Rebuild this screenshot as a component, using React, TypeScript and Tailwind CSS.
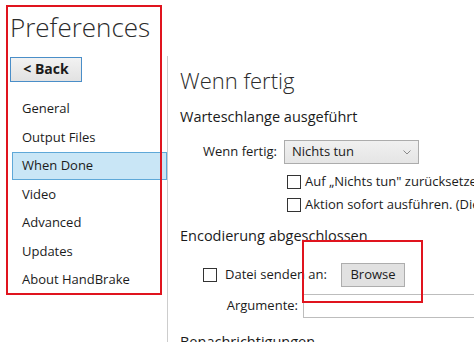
import React from "react";

function Checkbox() {
  return <span className="inline-block w-[14px] h-[14px] border border-[#333333] bg-white shrink-0" />;
}

export default function App() {
  const nav = ["General", "Output Files", "When Done", "Video", "Advanced", "Updates", "About HandBrake"];
  return (
    <div className="relative w-[474px] h-[342px] overflow-hidden bg-white text-[#1b1b1b] font-['Open_Sans',sans-serif]">
      <div className="flex h-full">
        {/* Left column */}
        <div className="w-[168px] shrink-0 flex flex-col">
          <div className="h-[56px] pl-[10px] pt-[10px] text-[26px] leading-[34px] font-light text-[#2b2b2b]">Preferences</div>
          <div className="flex-1 border-r border-[#cdcdcd] flex flex-col">
            <div className="pl-[10px]">
              <button className="w-[72px] h-[25px] border border-[#4a8ec8] bg-gradient-to-b from-[#f2f2f2] to-[#e2e2e2] text-[14px] font-bold leading-none text-[#1b1b1b]">
                &lt; Back
              </button>
            </div>
            <div className="mt-[13px] flex flex-col">
              {nav.map((n) => (
                <div
                  key={n}
                  className={
                    n === "When Done"
                      ? "ml-[12px] h-[28.5px] flex items-center pl-[9px] text-[13px] bg-[#c9e6f6] border border-[#5ea8d8]"
                      : "ml-[12px] h-[28.5px] flex items-center pl-[10px] text-[13px]"
                  }
                >
                  {n}
                </div>
              ))}
            </div>
          </div>
        </div>

        {/* Right column */}
        <div className="flex-1 pl-[12px] pt-[66px] whitespace-nowrap">
          <div className="text-[22px] leading-[28px] font-light text-[#2b2b2b]">Wenn fertig</div>
          <div className="mt-[13px] text-[14.5px] leading-[20px]">Warteschlange ausgeführt</div>
          <div className="mt-[13px] flex items-center pl-[23px] gap-[9px]">
            <span className="text-[13px] w-[72px]">Wenn fertig:</span>
            <div className="w-[135px] h-[24px] border border-[#acacac] bg-gradient-to-b from-[#f0f0f0] to-[#e5e5e5] flex items-center justify-between pl-[7px] pr-[7px]">
              <span className="text-[13px]">Nichts tun</span>
              <svg width="8" height="5" viewBox="0 0 8 5">
                <path d="M0.5 0.5 L4 4 L7.5 0.5" fill="none" stroke="#8a8a8a" strokeWidth="1" />
              </svg>
            </div>
          </div>
          <div className="mt-[6px] pl-[107px] flex flex-col">
            <div className="h-[23px] flex items-center gap-[4px] text-[13px]">
              <Checkbox />
              <span>Auf „Nichts tun" zurücksetzen</span>
            </div>
            <div className="h-[23px] flex items-center gap-[4px] text-[13px]">
              <Checkbox />
              <span>Aktion sofort ausführen. (Die</span>
            </div>
          </div>
          <div className="mt-[10px] text-[14.5px] leading-[20px]">Encodierung abgeschlossen</div>
          <div className="mt-[17px] pl-[23px] flex items-center h-[24px]">
            <Checkbox />
            <span className="ml-[8px] text-[13px] w-[116px]">Datei senden an:</span>
            <button className="w-[64px] h-[24px] border border-[#adadad] bg-[#e1e1e1] text-[13px]">Browse</button>
          </div>
          <div className="mt-[7px] flex items-center h-[24px]">
            <span className="w-[123px] text-right pr-[5px] text-[13px]">Argumente:</span>
            <div className="flex-1 h-[24px] border border-[#bdbdbd] bg-white" />
          </div>
          <div className="mt-[14px] text-[14.5px] leading-[20px]">Benachrichtigungen</div>
        </div>
      </div>

      {/* Annotation boxes */}
      <div className="absolute left-[6px] top-[5px] w-[156px] h-[290px] border-2 border-[#e0141e]" />
      <div className="absolute left-[302px] top-[240px] w-[121px] h-[63px] border-2 border-[#e0141e]" />
    </div>
  );
}
